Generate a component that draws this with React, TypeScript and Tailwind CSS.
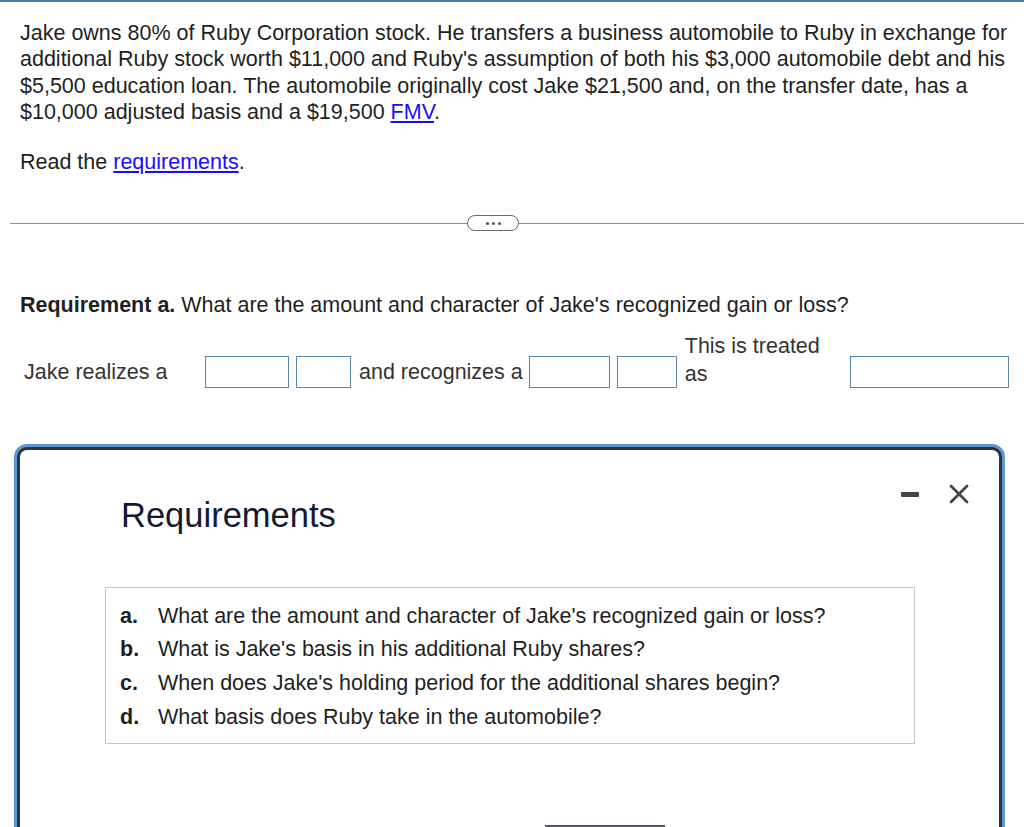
import { X } from 'lucide-react'

const requirements = [
  ['a.', "What are the amount and character of Jake's recognized gain or loss?"],
  ['b.', "What is Jake's basis in his additional Ruby shares?"],
  ['c.', "When does Jake's holding period for the additional shares begin?"],
  ['d.', 'What basis does Ruby take in the automobile?'],
]

function Box({ w }: { w: string }) {
  return <div className={`h-[32px] ${w} border border-[#5a87a8] bg-white`} />
}

export default function App() {
  return (
    <div className="relative h-[827px] w-[1024px] overflow-hidden bg-white font-['Liberation_Sans',Arial,sans-serif] text-[21.5px] text-[#1f1f1f]">
      <div className="h-[2px] bg-[#4f7ba0]" />

      <div className="pl-[20px] pr-[10px] pt-[18px] leading-[26.4px]">
        <p>
          Jake owns 80% of Ruby Corporation stock. He transfers a business automobile to Ruby in exchange for
          additional Ruby stock worth $11,000 and Ruby's assumption of both his $3,000 automobile debt and his
          $5,500 education loan. The automobile originally cost Jake $21,500 and, on the transfer date, has a
          $10,000 adjusted basis and a $19,500{' '}
          <span className="text-[#1a0dff] underline underline-offset-2">FMV</span>.
        </p>
        <p className="mt-[23px]">
          Read the <span className="text-[#1a0dff] underline underline-offset-2">requirements</span>.
        </p>
      </div>

      <div className="mt-[40px] ml-[10px] flex items-center">
        <div className="h-px flex-1 bg-[#8a94a0]" />
        <div className="flex h-[16px] w-[52px] items-center justify-center gap-[3px] rounded-full border border-[#5f6b78] bg-white">
          <span className="h-[3px] w-[3px] rounded-full bg-[#4a5360]" />
          <span className="h-[3px] w-[3px] rounded-full bg-[#4a5360]" />
          <span className="h-[3px] w-[3px] rounded-full bg-[#4a5360]" />
        </div>
        <div className="h-px w-[505px] bg-[#8a94a0]" />
      </div>

      <p className="mt-[58px] pl-[20px]">
        <span className="font-bold">Requirement a.</span> What are the amount and character of Jake's recognized
        gain or loss?
      </p>

      <div className="mt-[35px] flex items-center pl-[24px] text-[#333]">
        <span className="w-[181px]">Jake realizes a</span>
        <Box w="w-[84px]" />
        <div className="ml-[7px]">
          <Box w="w-[55px]" />
        </div>
        <span className="ml-[8px] mr-[6px]">and recognizes a</span>
        <Box w="w-[81px]" />
        <div className="ml-[7px]">
          <Box w="w-[60px]" />
        </div>
        <div className="ml-[8px] w-[165px] leading-[28px] -mt-[24px]">
          This is treated
          <br />
          as
        </div>
        <Box w="w-[159px]" />
      </div>

      <div className="absolute left-[14px] top-[444px] h-[420px] w-[991px] rounded-[13px] border-[3px] border-[#5b97d6] bg-[#5b97d6]">
        <div className="h-full w-full rounded-[10px] border-[3px] border-[#2f3237] bg-white">
          <div className="flex items-start justify-between pl-[101px] pr-[24px] pt-[45px]">
            <h2 className="text-[34.5px] text-[#141a33] leading-[40px]">Requirements</h2>
            <div className="-mt-[17px] flex items-center gap-[24px] text-[#3f4650]">
              <div className="h-[5px] w-[18px] rounded-[1px] bg-[#40454d]" />
              <X size={32} strokeWidth={2.1} />
            </div>
          </div>

          <div className="ml-[85px] mt-[52px] w-[810px] border border-[#c6c6c6] px-[14px] pt-[11px] pb-[9px] text-[#1f1f1f]">
            {requirements.map(([k, v]) => (
              <div key={k} className="flex h-[33.7px] items-center">
                <span className="w-[38px] font-bold">{k}</span>
                <span>{v}</span>
              </div>
            ))}
          </div>
        </div>
      </div>

      <div className="absolute left-[545px] top-[825px] h-[2px] w-[120px] bg-[#55585f]" />
    </div>
  )
}
